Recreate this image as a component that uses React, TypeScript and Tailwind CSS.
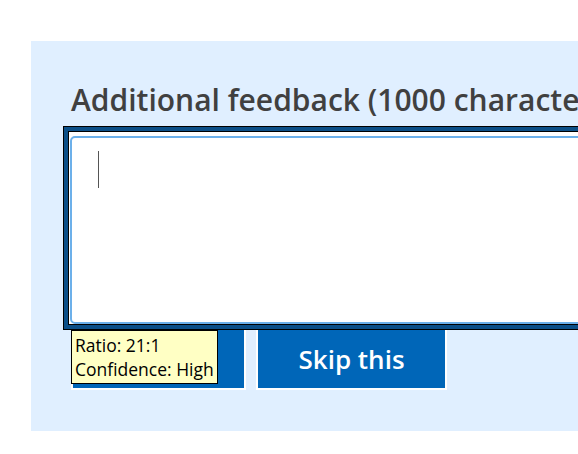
export default function App() {
  return (
    <div className="h-[454px] w-[578px] overflow-hidden bg-white pl-[31px] pt-[41px] font-['Open_Sans',sans-serif]">
      <div className="relative h-[390px] w-[600px] bg-[#e0efff] pl-[40px]">
        <h2 className="pt-[44px] text-[30px] font-semibold leading-[30px] whitespace-nowrap text-[#404040]">
          Additional feedback (1000 characters max)
        </h2>

        {/* focus outline around the text box */}
        <div className="-ml-[8px] mt-[11px] w-[600px] border border-black bg-[#0b4f88] p-[4px]">
          <div className="border border-black bg-white pl-[1px] pt-[4px]">
            <div className="h-[188px] rounded-[5px] border-2 border-[#6cb0ea] bg-white pl-[26px] pt-[13px]">
              <span className="block h-[37px] w-px bg-[#555]" />
            </div>
          </div>
        </div>

        <div className="relative flex gap-[10px]">
          <button className="h-[60px] w-[175px] border-x-2 border-b-2 border-white bg-[#0066b8] text-[26px] font-semibold text-white">
            Submit
          </button>
          <button className="h-[60px] w-[191px] border-x-2 border-b-2 border-white bg-[#0066b8] text-[26px] font-semibold text-white">
            Skip this
          </button>

          <div className="absolute left-0 top-0 h-[54px] w-[147px] border border-black bg-[#ffffc4] pl-[3px] pt-[2px] text-[17.5px] leading-[24px] text-black">
            <p>Ratio: 21:1</p>
            <p>Confidence: High</p>
          </div>
        </div>
      </div>
    </div>
  );
}
